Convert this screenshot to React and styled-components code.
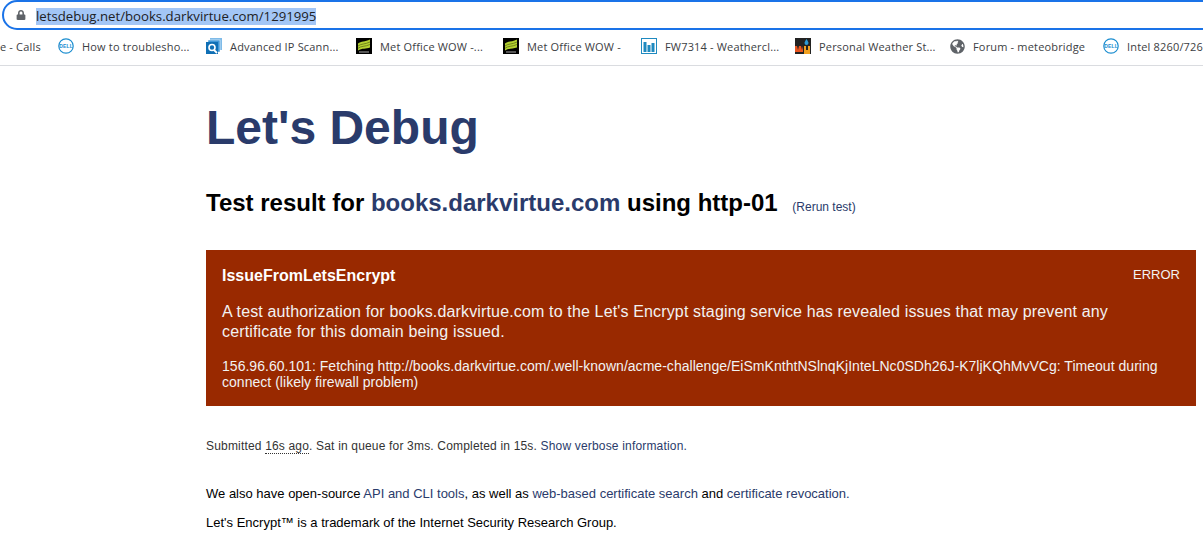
import styled, { createGlobalStyle } from "styled-components";
import { FaLock, FaGlobeAmericas } from "react-icons/fa";

const GlobalStyle = createGlobalStyle`
  html, body {
    margin: 0;
    padding: 0;
    background: #fff;
  }
  body {
    font-family: "Liberation Sans", Arial, sans-serif;
    overflow: hidden;
  }
`;

const Page = styled.div`
  width: 1203px;
  height: 536px;
  overflow: hidden;
`;

// Browser chrome
const AddressBar = styled.div`
  display: flex;
  align-items: center;
  box-sizing: border-box;
  height: 30px;
  width: 1240px;
  margin-left: 2px;
  padding-left: 12px;
  border: 2px solid #1a73e8;
  border-radius: 15px;
  color: #5f6368;
  font-size: 12px;
`;

const Url = styled.span`
  margin: 3px 0 0 10px;
  background: #a3c6f6;
  color: #202124;
  font-family: "Open Sans", sans-serif;
  font-size: 13.2px;
  line-height: 17px;
`;

const BookmarkBar = styled.div`
  display: flex;
  align-items: center;
  gap: 16px;
  box-sizing: border-box;
  height: 36px;
  padding-bottom: 3px;
  border-bottom: 1px solid #dadce0;
  overflow: hidden;
  white-space: nowrap;
  color: #3c4043;
  font-family: "Open Sans", sans-serif;
  font-size: 11px;
  letter-spacing: 0.17px;
`;

const Bookmark = styled.div`
  display: flex;
  align-items: center;
  flex: none;
  gap: 8px;
  width: ${(props) => props.$w}px;

  svg {
    flex: none;
  }
`;

// Page content
const Main = styled.main`
  width: 990px;
  margin-left: 206px;
`;

const Title = styled.h1`
  margin: 34px 0 0;
  color: #2a3b6b;
  font-size: 48px;
  font-weight: 700;
  line-height: 55px;
`;

const Subtitle = styled.h2`
  margin: 34px 0 0;
  color: #000;
  font-size: 24px;
  font-weight: 700;
  line-height: 28px;
`;

const Link = styled.a`
  color: #2a3b6b;
  text-decoration: none;
`;

const Rerun = styled(Link)`
  margin-left: 8px;
  font-size: 12px;
  font-weight: 400;
`;

const Problem = styled.section`
  box-sizing: border-box;
  height: 156px;
  margin-top: 29px;
  padding: 17px 16px 16px;
  background: #992900;
  color: #f2f2f2;
`;

const ProblemHead = styled.div`
  display: flex;
  justify-content: space-between;
  align-items: flex-start;
`;

const ProblemName = styled.div`
  color: #fff;
  font-size: 16px;
  font-weight: 700;
  line-height: 18px;
`;

const Severity = styled.div`
  font-size: 13px;
  line-height: 15px;
`;

const ProblemText = styled.p`
  margin: 17px 0 0;
  font-size: 16px;
  line-height: 20px;
  letter-spacing: 0.15px;
`;

const ProblemDetail = styled.p`
  margin: 16px 0 0;
  font-size: 14px;
  line-height: 16px;
  letter-spacing: 0.03px;
`;

const Status = styled.p`
  margin: 33px 0 0;
  color: #333;
  font-size: 12px;
  line-height: 14px;
  letter-spacing: 0.175px;
`;

const Note = styled.p`
  margin: ${(props) => props.$top}px 0 0;
  color: #000;
  font-size: 13px;
  line-height: 14px;
`;

const Ago = styled.span`
  border-bottom: 1px dotted #333;
`;

const DellIcon = () => (
  <svg width="16" height="16" viewBox="0 0 16 16">
    <circle cx="8" cy="8" r="7.2" fill="#fff" stroke="#1c8ed0" strokeWidth="1.2" />
    <text x="8" y="9.8" textAnchor="middle" fontSize="5" fontWeight="700" fill="#1c8ed0" fontFamily="Liberation Sans">
      DELL
    </text>
  </svg>
);

const ScannerIcon = () => (
  <svg width="16" height="16" viewBox="0 0 16 16">
    <rect x="4" y="0" width="12" height="12" fill="#7fbbe8" />
    <rect x="2" y="2" width="12" height="12" fill="#3f97d8" stroke="#fff" strokeWidth="0.5" />
    <rect x="0" y="4" width="12" height="12" fill="#0f6fb5" />
    <circle cx="6" cy="9.5" r="3" fill="#0f6fb5" stroke="#fff" strokeWidth="1.6" />
    <path d="M8 12l3 3" stroke="#fff" strokeWidth="1.8" />
  </svg>
);

const MetIcon = () => (
  <svg width="16" height="16" viewBox="0 0 16 16">
    <rect width="16" height="16" fill="#000" />
    <path d="M2 5.5C5 3 9 4 14 1.5V9.5C10 11 6 10 2 12.5Z" fill="#b4d032" />
    <path d="M2 8C5 5.5 9 6.5 14 4M2 10.3C5 7.8 9 8.8 14 6.5" stroke="#55650f" strokeWidth="0.7" fill="none" />
    <rect x="3" y="13.5" width="10" height="1" fill="#aaa" />
  </svg>
);

const WeatherCloudIcon = () => (
  <svg width="16" height="16" viewBox="0 0 16 16">
    <rect width="16" height="16" fill="#1f8ac0" />
    <rect x="1" y="1" width="14" height="14" fill="#fff" />
    <rect x="2.5" y="4" width="3" height="10" fill="#1f8ac0" />
    <rect x="6.5" y="7" width="3" height="7" fill="#1f8ac0" />
    <rect x="10.5" y="5" width="3" height="9" fill="#1f8ac0" />
  </svg>
);

const UndergroundIcon = () => (
  <svg width="16" height="16" viewBox="0 0 16 16">
    <rect width="16" height="16" fill="#222" />
    <path d="M11.5 1c1.2 2 2 3 2 4a2 2 0 0 1-4 0c0-1 .8-2 2-4z" fill="#2a9ad6" />
    <path d="M0 8h2l1 4 1-4h2l1 4 1-4v6H0z" fill="#e8541e" />
    <path d="M9 8h2v4h2V8h2v8H9z" fill="#f0a020" />
  </svg>
);

const bookmarks = [
  { id: 1, icon: <DellIcon />, label: "How to troublesho...", w: 132 },
  { id: 2, icon: <ScannerIcon />, label: "Advanced IP Scann...", w: 134 },
  { id: 3, icon: <MetIcon />, label: "Met Office WOW -...", w: 131 },
  { id: 4, icon: <MetIcon />, label: "Met Office WOW -", w: 122 },
  { id: 5, icon: <WeatherCloudIcon />, label: "FW7314 - Weathercl...", w: 138 },
  { id: 6, icon: <UndergroundIcon />, label: "Personal Weather St...", w: 139 },
  { id: 7, icon: <FaGlobeAmericas size={15} color="#5f6368" />, label: "Forum - meteobridge", w: 137 },
  { id: 8, icon: <DellIcon />, label: "Intel 8260/7265", w: 110 },
];

export default function App() {
  return (
    <Page>
      <GlobalStyle />
      <AddressBar>
        <FaLock size={10} />
        <Url>letsdebug.net/books.darkvirtue.com/1291995</Url>
      </AddressBar>
      <BookmarkBar>
        <Bookmark $w={42}>e - Calls</Bookmark>
        {bookmarks.map((item) => (
          <Bookmark key={item.id} $w={item.w}>
            {item.icon}
            {item.label}
          </Bookmark>
        ))}
      </BookmarkBar>
      <Main>
        <Title>Let's Debug</Title>
        <Subtitle>
          Test result for <Link href="#">books.darkvirtue.com</Link> using http-01{" "}
          <Rerun href="#">(Rerun test)</Rerun>
        </Subtitle>
        <Problem>
          <ProblemHead>
            <ProblemName>IssueFromLetsEncrypt</ProblemName>
            <Severity>ERROR</Severity>
          </ProblemHead>
          <ProblemText>
            A test authorization for books.darkvirtue.com to the Let's Encrypt staging service has revealed issues
            that may prevent any certificate for this domain being issued.
          </ProblemText>
          <ProblemDetail>
            156.96.60.101: Fetching http://books.darkvirtue.com/.well-known/acme-challenge/EiSmKnthtNSlnqKjInteLNc0SDh26J-K7ljKQhMvVCg:
            Timeout during connect (likely firewall problem)
          </ProblemDetail>
        </Problem>
        <Status>
          Submitted <Ago>16s ago</Ago>. Sat in queue for 3ms. Completed in 15s.{" "}
          <Link href="#">Show verbose information.</Link>
        </Status>
        <Note $top={34}>
          We also have open-source <Link href="#">API and CLI tools</Link>, as well as{" "}
          <Link href="#">web-based certificate search</Link> and <Link href="#">certificate revocation.</Link>
        </Note>
        <Note $top={15}>Let's Encrypt™ is a trademark of the Internet Security Research Group.</Note>
      </Main>
    </Page>
  );
}
